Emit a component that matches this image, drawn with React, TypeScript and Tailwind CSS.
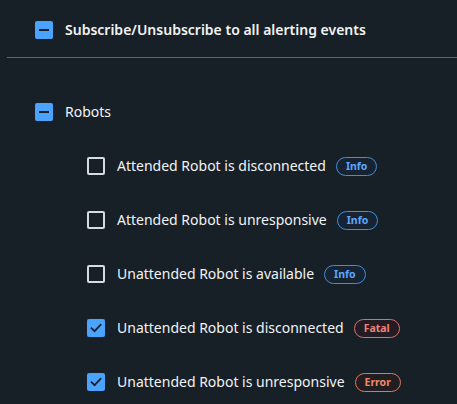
import React from "react";

type Sev = "Info" | "Fatal" | "Error";

const badgeCls: Record<Sev, string> = {
  Info: "border-[#3d8fe0] text-[#5aa7ff] bg-[#182331]",
  Fatal: "border-[#d9706b] text-[#f0837d] bg-[#241c22]",
  Error: "border-[#df7858] text-[#f08a6a] bg-[#221d20]",
};

function Box({ state }: { state: "off" | "on" | "mixed" }) {
  if (state === "off")
    return <div className="w-[18px] h-[18px] shrink-0 rounded-[2px] border-2 border-[#d5dbe0]" />;
  return (
    <div className="w-[18px] h-[18px] shrink-0 rounded-[2px] bg-[#4aa3ff] flex items-center justify-center">
      {state === "mixed" ? (
        <div className="w-[10px] h-[2px] bg-[#182027]" />
      ) : (
        <svg width="14" height="14" viewBox="0 0 14 14" fill="none">
          <path d="M2.5 7.2 L5.6 10.2 L11.6 3.8" stroke="#182027" strokeWidth="1.7" strokeLinecap="square" />
        </svg>
      )}
    </div>
  );
}

const rows: { label: string; sev: Sev; on: boolean }[] = [
  { label: "Attended Robot is disconnected", sev: "Info", on: false },
  { label: "Attended Robot is unresponsive", sev: "Info", on: false },
  { label: "Unattended Robot is available", sev: "Info", on: false },
  { label: "Unattended Robot is disconnected", sev: "Fatal", on: true },
  { label: "Unattended Robot is unresponsive", sev: "Error", on: true },
];

export default function App() {
  return (
    <div
      className="w-full h-[404px] overflow-hidden bg-[#182027] text-[#f1f3f5]"
      style={{ fontFamily: '"Noto Sans", "Open Sans", sans-serif' }}
    >
      <div className="flex items-center gap-3 pl-[35px] pt-[21px]">
        <Box state="mixed" />
        <span className="text-[14px] font-semibold leading-[18px]">
          Subscribe/Unsubscribe to all alerting events
        </span>
      </div>
      <div className="ml-[7px] mt-[18px] h-px bg-[#5b6670]" />
      <div className="flex items-center gap-3 pl-[35px] mt-[45px]">
        <Box state="mixed" />
        <span className="text-[14px] leading-[18px]">Robots</span>
      </div>
      <div className="flex flex-col gap-[36px] pl-[87px] mt-[36px]">
        {rows.map((r) => (
          <div key={r.label} className="flex items-center h-[18px]">
            <Box state={r.on ? "on" : "off"} />
            <span className="ml-3 text-[14px] leading-[18px]">{r.label}</span>
            <span
              className={`ml-[10px] h-[19px] px-[9px] rounded-full border flex items-center text-[10.5px] font-bold leading-none ${badgeCls[r.sev]}`}
            >
              {r.sev}
            </span>
          </div>
        ))}
      </div>
    </div>
  );
}
